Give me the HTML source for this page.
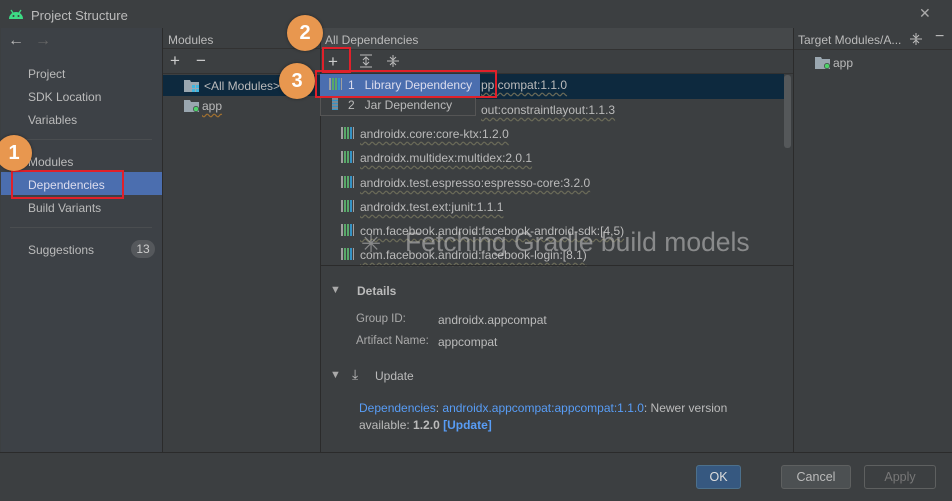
<!DOCTYPE html>
<html><head><meta charset="utf-8"><style>
*{margin:0;padding:0;box-sizing:border-box}
body{width:952px;height:501px;overflow:hidden;background:#3c3f41;font-family:"Liberation Sans","Noto Sans CJK KR",sans-serif;font-size:12px;color:#bbbbbb;position:relative}
.a{position:absolute}
.t{position:absolute;white-space:nowrap}
.circle{position:absolute;width:36px;height:36px;border-radius:50%;background:#e8974f;color:#fff;font-weight:bold;font-size:20px;text-align:center;line-height:36px;box-shadow:0 0 3px rgba(0,0,0,.4)}
.red{position:absolute;border:2px solid #e0202a}
.dep{position:absolute;left:341px;height:18px;white-space:nowrap;font-size:12px;color:#bbbbbb}
.dep span{text-decoration:underline wavy #6a6a58;text-underline-offset:3px}
.lib{display:inline-block;width:14px;height:12px;vertical-align:-1px;margin-right:5px;background:linear-gradient(90deg,#a0a0a0 0 2px,transparent 2px 3px,#59a869 3px 5px,transparent 5px 6px,#59a869 6px 8px,transparent 8px 9px,#3592c4 9px 11px,transparent 11px 12px,#a0a0a0 12px 13px,transparent 13px)}
.btn{position:absolute;top:465px;height:24px;border:1px solid #5e6060;border-radius:3px;background:#4c5052;text-align:center;line-height:22px;font-size:12.5px}
</style></head><body>
<div class="a" style="left:0;top:0;width:952px;height:28px;background:#3c3f41"></div>
<svg class="a" style="left:8px;top:8px" width="16" height="12" viewBox="0 0 16 12"><path d="M1 11 A7 7 0 0 1 15 11 Z" fill="#3ddc84"/><path d="M3 2 L5 5 M13 2 L11 5" stroke="#3ddc84" stroke-width="1.3"/><circle cx="5.5" cy="8" r="1" fill="#3c3f41"/><circle cx="10.5" cy="8" r="1" fill="#3c3f41"/></svg>
<div class="t" style="left:31px;top:8px;font-size:13px;color:#bbb">Project Structure</div>
<div class="t" style="left:919px;top:5px;font-size:14px;color:#aaa">✕</div>
<div class="a" style="left:1px;top:28px;width:161px;height:424px;background:#3d4146"></div>
<div class="a" style="left:162px;top:28px;width:1px;height:424px;background:#2b2b2b"></div>
<div class="t" style="left:8px;top:32px;font-size:16px;color:#bbb">←</div>
<div class="t" style="left:35px;top:32px;font-size:16px;color:#666">→</div>
<div class="t" style="left:28px;top:67px">Project</div>
<div class="t" style="left:28px;top:90px">SDK Location</div>
<div class="t" style="left:28px;top:113px">Variables</div>
<div class="a" style="left:10px;top:139px;width:142px;height:1px;background:#4a4d50"></div>
<div class="t" style="left:28px;top:155px">Modules</div>
<div class="a" style="left:1px;top:172px;width:161px;height:23px;background:#4b6eaf"></div>
<div class="t" style="left:28px;top:178px;color:#dde">Dependencies</div>
<div class="t" style="left:28px;top:201px">Build Variants</div>
<div class="a" style="left:10px;top:227px;width:142px;height:1px;background:#4a4d50"></div>
<div class="t" style="left:28px;top:243px">Suggestions</div>
<div class="a" style="left:131px;top:240px;width:24px;height:18px;border-radius:9px;background:#55585c;color:#ccc;text-align:center;line-height:18px;font-size:12px">13</div>
<div class="t" style="left:168px;top:33px">Modules</div>
<div class="a" style="left:163px;top:48px;width:157px;height:1px;background:#323232"></div>
<div class="t" style="left:170px;top:51px;font-size:17px;color:#ccc">+</div>
<div class="t" style="left:196px;top:51px;font-size:17px;color:#ccc">−</div>
<div class="a" style="left:163px;top:73px;width:157px;height:1px;background:#323232"></div>
<div class="a" style="left:163px;top:75px;width:157px;height:21px;background:#0d293e"></div>
<svg class="a" style="left:184px;top:79px" width="16" height="13"><path d="M0 1h6l1 2h8v10H0z" fill="#9aa7b0"/><rect x="8" y="6" width="3" height="3" fill="#40b6e0"/><rect x="12" y="6" width="3" height="3" fill="#40b6e0"/><rect x="8" y="10" width="3" height="3" fill="#40b6e0"/><rect x="12" y="10" width="3" height="3" fill="#40b6e0"/></svg>
<div class="t" style="left:204px;top:79px">&lt;All Modules&gt;</div>
<svg class="a" style="left:184px;top:99px" width="16" height="13"><path d="M0 1h6l1 2h8v10H0z" fill="#9aa7b0"/><circle cx="12" cy="10" r="3" fill="#3c3f41"/><circle cx="12" cy="10" r="2.3" fill="#4fd26b"/></svg>
<div class="t" style="left:202px;top:99px;text-decoration:underline wavy #a07030;text-underline-offset:3px">app</div>
<div class="a" style="left:320px;top:28px;width:1px;height:424px;background:#2b2b2b"></div>
<div class="a" style="left:321px;top:28px;width:472px;height:21px;background:#45484a"></div>
<div class="t" style="left:325px;top:33px">All Dependencies</div>
<div class="a" style="left:321px;top:49px;width:472px;height:1px;background:#323232"></div>
<div class="t" style="left:328px;top:52px;font-size:17px;color:#ccc">+</div>
<svg class="a" style="left:359px;top:54px" width="14" height="14" stroke="#bbb" fill="none"><path d="M1 1h12M1 13h12M7 3v8M4 6l3-3 3 3M4 8l3 3 3-3"/></svg>
<svg class="a" style="left:386px;top:54px" width="14" height="14" stroke="#bbb" fill="none"><path d="M1 7h12M7 1v4M4 3l3 3 3-3M7 13v-4M4 11l3-3 3 3"/></svg>
<div class="a" style="left:321px;top:73px;width:472px;height:1px;background:#323232"></div>
<div class="a" style="left:321px;top:74px;width:463px;height:25px;background:#0d293e"></div>
<div class="a" style="left:784px;top:75px;width:7px;height:73px;background:#55585a;border-radius:3px"></div>
<div class="dep" style="top:78px;left:481px"><span>pp:compat:1.1.0</span></div>
<div class="dep" style="top:103px;left:481px"><span>out:constraintlayout:1.1.3</span></div>
<div class="dep" style="top:127px"><i class="lib"></i><span>androidx.core:core-ktx:1.2.0</span></div>
<div class="dep" style="top:151px"><i class="lib"></i><span>androidx.multidex:multidex:2.0.1</span></div>
<div class="dep" style="top:176px"><i class="lib"></i><span>androidx.test.espresso:espresso-core:3.2.0</span></div>
<div class="dep" style="top:200px"><i class="lib"></i><span>androidx.test.ext:junit:1.1.1</span></div>
<div class="dep" style="top:224px"><i class="lib"></i><span>com.facebook.android:facebook-android-sdk:[4,5)</span></div>
<div class="dep" style="top:248px"><i class="lib"></i><span>com.facebook.android:facebook-login:[8.1)</span></div>
<div class="t" style="left:361px;top:230px;font-size:24px;color:rgba(200,200,200,.55)">✳</div>
<div class="t" style="left:405px;top:227px;font-size:26.5px;color:rgba(200,200,200,.55)">Fetching Gradle build models</div>
<div class="a" style="left:321px;top:265px;width:472px;height:1px;background:#2b2b2b"></div>
<div class="a" style="left:320px;top:74px;width:156px;height:42px;background:#3c3f41;border:1px solid #555"></div>
<div class="a" style="left:320px;top:74px;width:160px;height:23px;background:#4b6eaf"></div>
<div class="t" style="left:329px;top:78px;color:#dde"><i class="lib"></i>1&nbsp;&nbsp;&nbsp;Library Dependency</div>
<div class="a" style="left:332px;top:98px;width:6px;height:12px;background:repeating-linear-gradient(180deg,#7a8a96 0 2px,#3592c4 2px 3px)"></div>
<div class="t" style="left:348px;top:98px">2&nbsp;&nbsp;&nbsp;Jar Dependency</div>
<div class="t" style="left:330px;top:284px;font-size:11px;color:#aaa">▼</div>
<div class="t" style="left:357px;top:284px;font-weight:bold;color:#bbb">Details</div>
<div class="t" style="left:356px;top:313px;color:#aaa;font-size:11.5px">Group ID:</div>
<div class="t" style="left:438px;top:313px">androidx.appcompat</div>
<div class="t" style="left:356px;top:335px;color:#aaa;font-size:11.5px">Artifact Name:</div>
<div class="t" style="left:438px;top:335px">appcompat</div>
<div class="t" style="left:330px;top:369px;font-size:11px;color:#aaa">▼</div>
<div class="t" style="left:352px;top:366px;font-size:14px;color:#bbb">⤓</div>
<div class="t" style="left:375px;top:369px">Update</div>
<div class="t" style="left:359px;top:401px"><span style="color:#589df6">Dependencies</span>: <span style="color:#589df6">androidx.appcompat:appcompat:1.1.0</span>: Newer version</div>
<div class="t" style="left:359px;top:418px">available: <b>1.2.0</b> <b style="color:#589df6">[Update]</b></div>
<div class="a" style="left:793px;top:28px;width:1px;height:424px;background:#2b2b2b"></div>
<div class="t" style="left:798px;top:33px">Target Modules/A...</div>
<div class="t" style="left:935px;top:28px;font-size:16px;color:#bbb">−</div>
<svg class="a" style="left:909px;top:32px" width="14" height="14" stroke="#bbb" fill="none"><path d="M1 7h12M7 1v4M4 3l3 3 3-3M7 13v-4M4 11l3-3 3 3"/></svg>
<div class="a" style="left:794px;top:49px;width:158px;height:1px;background:#323232"></div>
<svg class="a" style="left:815px;top:56px" width="16" height="13"><path d="M0 1h6l1 2h8v10H0z" fill="#9aa7b0"/><circle cx="12" cy="10" r="3" fill="#3c3f41"/><circle cx="12" cy="10" r="2.3" fill="#4fd26b"/></svg>
<div class="t" style="left:833px;top:56px">app</div>
<div class="a" style="left:0;top:452px;width:952px;height:1px;background:#2b2b2b"></div>
<div class="btn" style="left:696px;width:45px;background:#365880;border-color:#4c708c;color:#ddd">OK</div>
<div class="btn" style="left:781px;width:70px">Cancel</div>
<div class="btn" style="left:864px;width:72px;background:#3c3f41;color:#777">Apply</div>
<div class="red" style="left:11px;top:170px;width:113px;height:29px"></div>
<div class="red" style="left:322px;top:47px;width:29px;height:26px"></div>
<div class="red" style="left:315px;top:70px;width:182px;height:28px"></div>
<div class="circle" style="left:-4px;top:135px">1</div>
<div class="circle" style="left:287px;top:15px">2</div>
<div class="circle" style="left:279px;top:63px">3</div>
</body></html>
